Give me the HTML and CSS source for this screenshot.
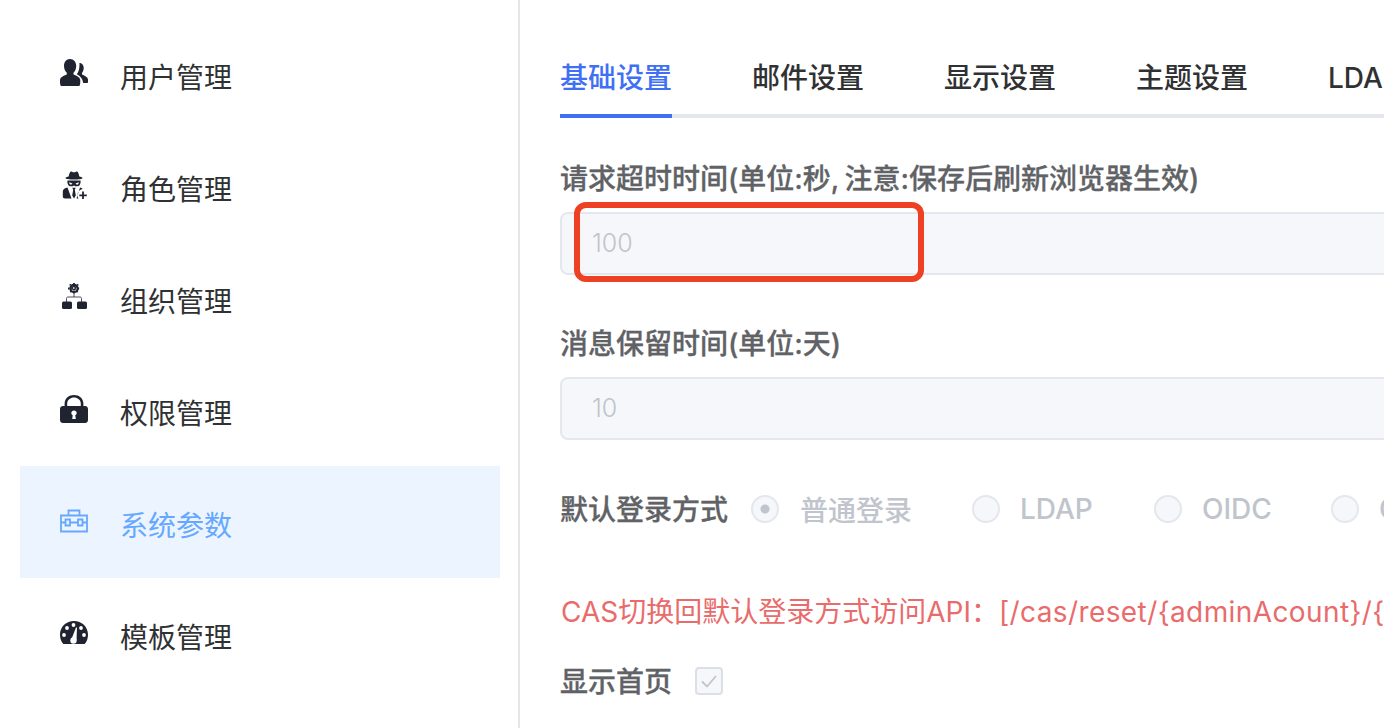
FILE: index.html
```html
<!DOCTYPE html>
<html>
<head>
    <meta charset="UTF-8">
    <title>系统参数</title>
    <link rel="stylesheet" href="styles.css">
</head>
<body>
    <div class="pagina">
        <div class="lateral">
            <div class="opcion">
                <svg class="icono" viewBox="0 0 28 28"><path d="M10 0c3.800 0 6.200 3 6.200 7 0 3-1.200 5.300-2.700 6.700v1.700c3.300 1.100 6.400 2.800 6.700 5.300.2 2.100.1 6-1 6.300H1.200C0 27-.2 23.200 0 20.700c.4-2.500 3.500-4.200 6.800-5.300v-1.700C5.200 12.300 4 10 4 7c0-4 2.200-7 6-7z"/><path d="M19 4c2.800-.3 4.700 2 4.700 5 0 2.100-.8 3.900-1.700 4.900v1.600c2.500 1 5.500 2.500 5.900 4.500.3 1.800.2 3.800-.4 4h-4.300c-.6-4.400-2.800-7-6.400-8.800 2-2.500 3-6.700 2.600-11.200z"/></svg>
                <span>用户管理</span>
            </div>
            <div class="opcion">
                <svg class="icono" viewBox="0 0 28 28"><path d="M11 .5c1 0 1.700.8 3 .8s2-.8 3-.8c1.200 0 1.900 2.800 2.300 5 1.600.3 3.200.9 3.200 1.500 0 .9-3.800 1.600-8.500 1.600S5.500 7.900 5.500 7c0-.6 1.600-1.200 3.200-1.500.4-2.200 1.100-5 2.300-5z"/><path fill-rule="evenodd" d="M7.500 9.500h13c.3 1.300.1 3.600-1.100 4.900-1.200 1.200-3.900 1.300-5.400.1-1.500 1.200-4.200 1.100-5.400-.1-1.200-1.300-1.400-3.600-1.100-4.900zM9.300 11.300c-.1.800.2 1.700.8 2.100.9.400 2 0 2.300-.9zm9.400 0l-3.100 1.200c.3.900 1.400 1.300 2.300.9.600-.4.900-1.300.8-2.100z"/><path d="M7.500 16.500l4 11H5c-1.400 0-2.200-.8-2.200-2.200v-5c0-2 2.300-3.500 4.700-3.800zM20 16.500c1 .2 2.200.8 2.800 1.600-3 .4-5.300 3-5.300 6.200 0 1.200.4 2.300 1 3.200H16.500zM12.300 16.800h3.400l-.9 2 1 5.800-1.800 2.900-1.800-2.900 1-5.800z"/><path fill="none" stroke="currentColor" stroke-width="1.800" d="M23 20.500v7.500M19.300 24.300h7.500"/></svg>
                <span>角色管理</span>
            </div>
            <div class="opcion">
                <svg class="icono" viewBox="0 0 28 28"><circle cx="14" cy="5.500" r="3.600" fill="none" stroke="currentColor" stroke-width="2.200"/><path fill="none" stroke="currentColor" stroke-width="1.800" stroke-dasharray="1.500 1.700" d="M14-.5v12M8 5.500h12M9.800 1.300l8.400 8.400M18.200 1.300l-8.400 8.400"/><path fill="none" stroke="currentColor" stroke-width=".8" d="M6.500 19v-3.500c0-1 .5-1.500 1.500-1.500h12c1 0 1.500.5 1.500 1.500V19M14 10.500V14"/><rect x="2" y="18.500" width="10" height="7.500" rx="1.500"/><rect x="17" y="18.500" width="10" height="7.500" rx="1.500"/></svg>
                <span>组织管理</span>
            </div>
            <div class="opcion">
                <svg class="icono" viewBox="0 0 28 28"><path fill-rule="evenodd" d="M14 0c5 0 9.400 3.400 9.400 8.500V11h1.600c1.700 0 3 1.300 3 3v11c0 1.700-1.300 3-3 3H3c-1.700 0-3-1.300-3-3V14c0-1.700 1.300-3 3-3h1.600V8.500C4.600 3.400 9 0 14 0zm0 2.400c-3.500 0-6.800 2.300-6.800 6.100V11h13.600V8.500c0-3.800-3.300-6.100-6.800-6.100zM14 15.500c-1.500 0-2.700 1.100-2.700 2.500 0 1 .6 1.800 1.400 2.200l-.5 3.800h3.600l-.5-3.800c.8-.4 1.400-1.200 1.400-2.200 0-1.400-1.200-2.500-2.700-2.500z"/></svg>
                <span>权限管理</span>
            </div>
            <div class="opcion activa">
                <svg class="icono" viewBox="0 0 28 24"><path fill="none" stroke="currentColor" stroke-width="1.800" d="M1 6.500h26v16H1zM8.500 6.500V1.500h11v5M1 13.500h4.500M10 13.500h8M22.500 13.500H27M5.500 10.500h4.500v6H5.500zM18 10.500h4.500v6H18z"/></svg>
                <span>系统参数</span>
            </div>
            <div class="opcion">
                <svg class="icono" viewBox="0 0 28 24"><path d="M14 0c7.700 0 14 5.800 14 13.500 0 3.200-.8 6-2.300 8.200-.5.800-1 1.300-2 1.300H4.300c-1 0-1.500-.5-2-1.300C.8 19.500 0 16.700 0 13.500 0 5.800 6.300 0 14 0z"/><g fill="#fff"><circle cx="13.500" cy="4" r="1.900"/><circle cx="7" cy="7" r="1.900"/><circle cx="4" cy="14" r="1.900"/><circle cx="24" cy="14" r="1.900"/><circle cx="21" cy="7" r="1.900"/><circle cx="13.500" cy="19.500" r="3.200"/><path d="M11.500 18L16 6.500h1l-.5 12.500z"/></g></svg>
                <span>模板管理</span>
            </div>
        </div>

        <div class="contenido">
            <div class="pestanas">
                <div class="pestana activa">基础设置</div>
                <div class="pestana">邮件设置</div>
                <div class="pestana">显示设置</div>
                <div class="pestana">主题设置</div>
                <div class="pestana">LDAP设置</div>
            </div>

            <div class="etiqueta primera">请求超时时间(单位:秒, 注意:保存后刷新浏览器生效)</div>
            <div class="campo">100</div>

            <div class="etiqueta segunda">消息保留时间(单位:天)</div>
            <div class="campo">10</div>

            <div class="fila-radios">
                <span class="etiqueta-fila">默认登录方式</span>
                <span class="radio marcado"></span><span class="texto-radio ancho-normal">普通登录</span>
                <span class="radio"></span><span class="texto-radio ancho-ldap">LDAP</span>
                <span class="radio"></span><span class="texto-radio ancho-oidc">OIDC</span>
                <span class="radio"></span><span class="texto-radio">CAS</span>
            </div>

            <div class="aviso">CAS切换回默认登录方式访问API：<span class="ruta">[/cas/reset/{adminAcount}/{adminPassword}]</span></div>

            <div class="fila-check">
                <span class="etiqueta-fila corta">显示首页</span>
                <span class="check">
                    <svg viewBox="0 0 24 24"><path fill="none" stroke="#c0c4cc" stroke-width="1.800" d="M5 12.500l5 5 9-10.500"/></svg>
                </span>
            </div>
        </div>
    </div>

    <div class="marca"></div>
</body>
</html>
```

FILE: styles.css
```css
* {
    box-sizing: border-box;
}

html, body {
    margin: 0;
    height: 100%;
    overflow: hidden;
    background-color: white;
}

body {
    position: relative;
    font-family: "Inter", "Noto Sans CJK SC", sans-serif;
    font-size: 28px;
    color: #303133;
}

.pagina {
    display: flex;
    height: 728px;
}

.lateral {
    flex: none;
    width: 520px;
    padding: 18px 18px 0 20px;
    border-right: 2px solid #e6e6e6;
}

.opcion {
    display: flex;
    align-items: center;
    height: 112px;
    padding: 4px 0 0 40px;
    color: #303133;
}

.opcion.activa {
    background-color: #ecf5ff;
    color: #66a8ff;
}

.icono {
    flex: none;
    width: 28px;
    height: 28px;
    margin-right: 32px;
    margin-bottom: 6px;
    fill: #1f2430;
    color: #1f2430;
}

.activa .icono {
    fill: none;
    color: #66a8ff;
}

.contenido {
    flex: 1;
    min-width: 0;
    padding-left: 40px;
    overflow: hidden;
}

.pestanas {
    display: flex;
    height: 118px;
    border-bottom: 4px solid #e4e7ed;
    white-space: nowrap;
}

.pestana {
    flex: none;
    width: 112px;
    margin-right: 80px;
    height: 118px;
    padding-top: 56px;
    line-height: 44px;
    color: #303133;
    font-weight: 500;
}

.pestana.activa {
    color: #3f6ff5;
    border-bottom: 4px solid #3f6ff5;
}

.etiqueta {
    line-height: 40px;
    color: #606266;
    font-weight: 500;
    -webkit-text-stroke: .3px #606266;
    word-spacing: -2px;
    white-space: nowrap;
}

.primera {
    margin-top: 41px;
    margin-bottom: 13px;
}

.segunda {
    margin-top: 49px;
    margin-bottom: 13px;
}

.campo {
    width: 1000px;
    height: 63px;
    padding-left: 30px;
    font-size: 25px;
    font-weight: 300;
    line-height: 59px;
    color: #c0c4cc;
    background-color: #f5f7fa;
    border: 2px solid #e4e7ed;
    border-radius: 8px;
}

.fila-radios {
    display: flex;
    align-items: center;
    height: 40px;
    margin-top: 49px;
    white-space: nowrap;
}

.etiqueta-fila {
    width: 166px;
    flex: none;
    padding-bottom: 2px;
    color: #606266;
    font-weight: 500;
    -webkit-text-stroke: .3px #606266;
    white-space: nowrap;
}

.corta {
    width: 112px;
}

.radio {
    flex: none;
    width: 28px;
    height: 28px;
    margin-right: 20px;
    background-color: #f5f7fa;
    border: 2px solid #e4e7ed;
    border-radius: 50%;
}

.radio.marcado {
    margin-left: 25px;
    margin-right: 21px;
    background: radial-gradient(circle, #c0c4cc 0 4px, #f5f7fa 5px);
}

.texto-radio {
    flex: none;
    color: #c0c4cc;
    font-weight: 500;
}

.ancho-normal {
    width: 112px;
    margin-right: 60px;
}

.ancho-ldap {
    width: 72px;
    margin-right: 62px;
}

.ancho-oidc {
    width: 69px;
    margin-right: 60px;
}

.aviso {
    margin-top: 63px;
    margin-left: 1px;
    line-height: 40px;
    color: #e96b6b;
    white-space: nowrap;
}

.ruta {
    letter-spacing: .4px;
}

.fila-check {
    display: flex;
    align-items: center;
    height: 40px;
    margin-top: 29px;
}

.check {
    flex: none;
    width: 28px;
    height: 28px;
    margin-left: 23px;
    background-color: #f5f7fa;
    border: 2px solid #dcdfe6;
    border-radius: 4px;
}

.check svg {
    display: block;
    width: 24px;
    height: 24px;
}

.marca {
    position: absolute;
    left: 574px;
    top: 202px;
    width: 350px;
    height: 80px;
    border: 6px solid #ee4123;
    border-radius: 12px;
}
```
